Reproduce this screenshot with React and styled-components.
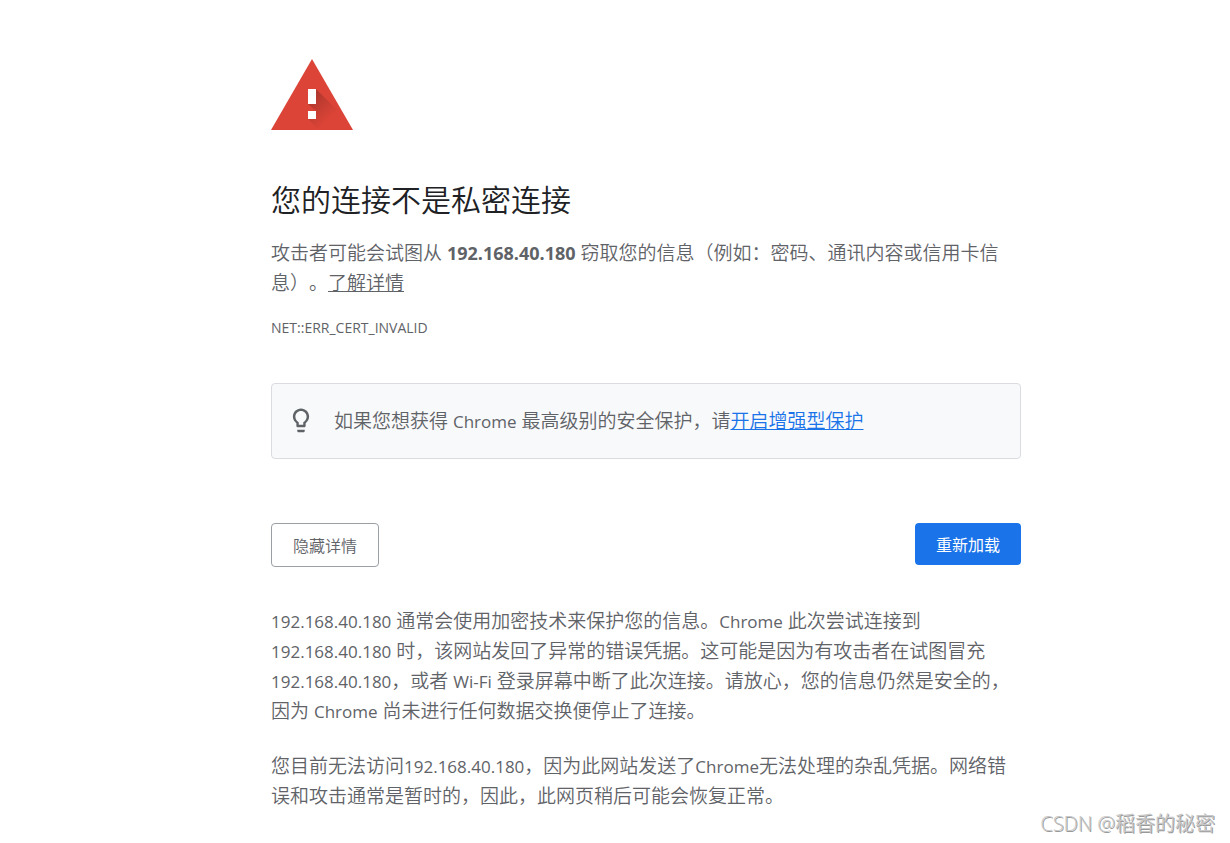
import React, { useState } from "react";
import styled, { createGlobalStyle, css } from "styled-components";

const GlobalStyle = createGlobalStyle`
  *,
  *::before,
  *::after {
    box-sizing: border-box;
  }

  body {
    margin: 0;
    background-color: #fff;
    color: #5f6368;
    font-family: "Open Sans", "Noto Sans CJK SC", sans-serif;
    font-size: 19px;
    font-weight: 350;
    line-height: 30px;
    text-spacing-trim: space-all;
  }
`;

// --------------------------
// -- Styled Subcomponents --
// --------------------------
const Page = styled.div`
  display: flex;
  flex-direction: column;
  padding-top: 59px;
`;

const Interstitial = styled.main`
  width: 100%;
  max-width: 1021px;
  padding-left: 271px;

  @media screen and (max-width: 900px) {
    padding: 0 24px;
  }
`;

const WarningIcon = styled.svg`
  display: block;
  width: 82px;
  height: 71px;
  margin-bottom: 50px;
`;

const Title = styled.h1`
  margin: 0 0 18px;
  color: #202124;
  font-size: 30px;
  font-weight: 350;
  line-height: 40px;
`;

const Paragraph = styled.p`
  margin: 0 0 25px;
`;

const Summary = styled(Paragraph)`
  margin-bottom: 18px;
`;

// Latin runs are set slightly smaller than the Chinese text around them
const Latin = styled.span`
  font-size: 17px;
  font-weight: 400;
  line-height: 20px;
`;

const Host = styled.strong`
  font-size: 18px;
  font-weight: 700;
  line-height: 20px;
`;

const TextLink = styled.a`
  color: ${(props) => (props.$primary ? "#1a73e8" : "inherit")};
  text-decoration: underline;
`;

const ErrorCode = styled.div`
  font-size: 14px;
  font-weight: 400;
  line-height: 24px;
`;

const Promo = styled.section`
  display: flex;
  align-items: center;
  gap: 18px;
  margin: 43px 0 64px;
  padding: 22px 14px;
  border: 1px solid #dadce0;
  border-radius: 4px;
  background-color: #f8f9fa;
`;

const BulbIcon = styled.svg`
  flex: none;
  width: 30px;
  height: 30px;
  fill: #5f6368;
`;

const Actions = styled.div`
  display: flex;
  align-items: flex-start;
  justify-content: space-between;
  margin-bottom: 39px;
`;

const buttonStyling = css`
  padding: 11px 21px 9px;
  border: 0;
  border-radius: 4px;
  font-family: inherit;
  font-size: 16px;
  line-height: 22px;
  cursor: pointer;
`;

const PrimaryButton = styled.button`
  ${buttonStyling}
  background-color: #1a73e8;
  color: #fff;
  font-weight: 400;
`;

const SecondaryButton = styled.button`
  ${buttonStyling}
  border: 1px solid #9aa0a6;
  background-color: #fff;
  color: #5f6368;
  font-weight: 350;
`;

const Details = styled.div`
  > :last-child {
    margin-bottom: 0;
  }
`;

const Watermark = styled.footer`
  align-self: flex-end;
  padding-right: 15px;
  color: #c8c8c8;
  font-size: 20px;
  line-height: 26px;
  text-shadow: 1px 1px 0 #999;
`;

// --------------------
// -- Main Component --
// --------------------
function App() {
  const [detailsOpen, setDetailsOpen] = useState(true);

  const handleToggle = () => {
    setDetailsOpen((open) => !open);
  };

  const handleReload = () => {
    window.location.reload();
  };

  return (
    <>
      <GlobalStyle />
      <Page>
        <Interstitial>
          <WarningIcon viewBox="0 0 82 71" aria-hidden="true">
            <defs>
              <linearGradient
                id="shade"
                gradientUnits="userSpaceOnUse"
                x1="40"
                y1="38"
                x2="60"
                y2="58"
              >
                <stop offset="0" stopColor="#000" stopOpacity="0.2" />
                <stop offset="1" stopColor="#000" stopOpacity="0" />
              </linearGradient>
            </defs>
            <path fill="#db4437" d="M41 0L82 71H0z" />
            <path
              fill="url(#shade)"
              d="M45 30L73 58L81 71H48L37 60L45 52L37 45H45z"
            />
            <path fill="#fff" d="M37 30h8v15h-8zM37 52h8v8h-8z" />
          </WarningIcon>
          <Title>您的连接不是私密连接</Title>
          <Summary>
            攻击者可能会试图从 <Host>192.168.40.180</Host>{" "}
            窃取您的信息（例如：密码、通讯内容或信用卡信息）。
            <TextLink href="#details">了解详情</TextLink>
          </Summary>
          <ErrorCode>NET::ERR_CERT_INVALID</ErrorCode>

          {/* Enhanced protection */}
          <Promo>
            <BulbIcon viewBox="0 0 24 24" aria-hidden="true">
              <path d="M9 20c0 .5.4 1 1 1h4c.6 0 1-.5 1-1v-1H9v1zm3-18C8.4 2 5.5 4.9 5.5 8.4c0 2.2 1.1 4.1 2.8 5.3V16c0 .5.4 1 1 1h5.4c.6 0 1-.5 1-1v-2.3c1.7-1.2 2.8-3.1 2.8-5.3C18.500 4.900 15.600 2 12 2zm2.600 10.300l-.8.6V15h-3.600v-2.100l-.8-.6C8.200 11.400 7.500 10 7.500 8.400c0-2.500 2-4.500 4.500-4.500s4.500 2 4.500 4.500c0 1.600-.7 3-1.900 3.900z" />
            </BulbIcon>
            <span>
              如果您想获得 <Latin>Chrome</Latin> 最高级别的安全保护，请
              <TextLink href="#protection" $primary>
                开启增强型保护
              </TextLink>
            </span>
          </Promo>

          <Actions>
            <SecondaryButton
              onClick={handleToggle}
              aria-expanded={detailsOpen}
            >
              {detailsOpen ? "隐藏详情" : "高级"}
            </SecondaryButton>
            <PrimaryButton onClick={handleReload}>重新加载</PrimaryButton>
          </Actions>

          {/* Details */}
          {detailsOpen && (
            <Details id="details">
              <Paragraph>
                <Latin>192.168.40.180</Latin>{" "}
                通常会使用加密技术来保护您的信息。<Latin>Chrome</Latin>{" "}
                此次尝试连接到 <Latin>192.168.40.180</Latin>{" "}
                时，该网站发回了异常的错误凭据。这可能是因为有攻击者在试图冒充{" "}
                <Latin>192.168.40.180</Latin>，或者 <Latin>Wi-Fi</Latin>{" "}
                登录屏幕中断了此次连接。请放心，您的信息仍然是安全的，因为{" "}
                <Latin>Chrome</Latin> 尚未进行任何数据交换便停止了连接。
              </Paragraph>
              <Paragraph>
                您目前无法访问<Latin>192.168.40.180</Latin>
                ，因为此网站发送了<Latin>Chrome</Latin>
                无法处理的杂乱凭据。网络错误和攻击通常是暂时的，因此，此网页稍后可能会恢复正常。
              </Paragraph>
            </Details>
          )}
        </Interstitial>
        <Watermark>CSDN @稻香的秘密</Watermark>
      </Page>
    </>
  );
}

export default App;
